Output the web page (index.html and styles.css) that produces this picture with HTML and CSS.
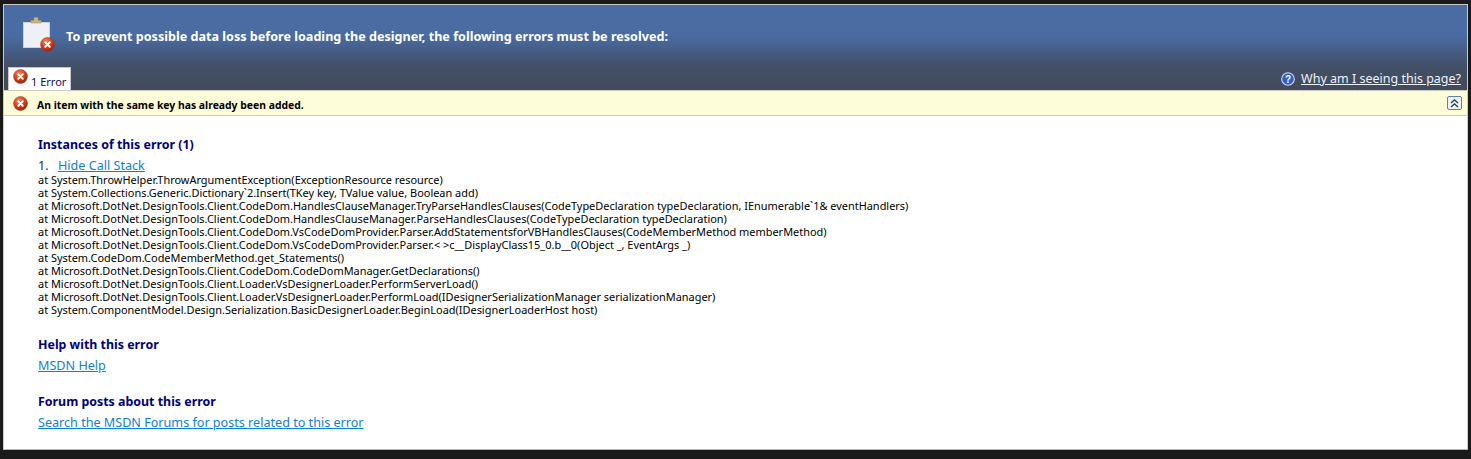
FILE: index.html
```html
<!DOCTYPE html>
<html lang="en">
<head>
  <meta charset="UTF-8" />
  <title>Designer errors</title>
  <link rel="stylesheet" href="styles.css">
</head>
<body>
  <svg class="defs" width="0" height="0">
    <defs>
      <radialGradient id="redBall" cx="40%" cy="30%" r="75%">
        <stop offset="0" stop-color="#f08a60"/>
        <stop offset="0.55" stop-color="#d5401c"/>
        <stop offset="1" stop-color="#8e1c0a"/>
      </radialGradient>
      <symbol id="errorIcon" viewBox="0 0 16 16">
        <circle cx="8" cy="8" r="7.4" fill="url(#redBall)" stroke="#a83a20" stroke-width="0.6"/>
        <path d="M5.6 5.6 L10.4 10.4 M10.4 5.6 L5.6 10.4" stroke="#fff" stroke-width="2" stroke-linecap="round"/>
      </symbol>
    </defs>
  </svg>

  <div class="window">
    <header class="banner">
      <div class="banner-top">
        <div class="clipboard">
          <svg class="clipboard-art" width="32" height="34" viewBox="0 0 32 34">
            <rect x="0.5" y="5.5" width="26" height="25" fill="#eef0f6" stroke="#c8cedd"/>
            <path d="M8 6 V3.5 H11 V0.5 H15 V3.5 H18 V6 Z" fill="#c9b77e" stroke="#a8975f" stroke-width="0.6"/>
          </svg>
          <svg class="clipboard-badge" width="15" height="15"><use href="#errorIcon"/></svg>
        </div>
        <h1>To prevent possible data loss before loading the designer, the following errors must be resolved:</h1>
      </div>
      <div class="banner-bottom">
        <div class="tab">
          <svg class="tab-icon" width="15" height="15"><use href="#errorIcon"/></svg>
          <span>1 Error</span>
        </div>
        <div class="why">
          <svg width="14" height="14" viewBox="0 0 14 14">
            <circle cx="7" cy="7" r="6.3" fill="#2f5fc4" stroke="#cfdcf5" stroke-width="1.1"/>
            <text x="7" y="10.5" class="why-q">?</text>
          </svg>
          <a href="#">Why am I seeing this page?</a>
        </div>
      </div>
    </header>

    <div class="error-bar">
      <svg width="15" height="15"><use href="#errorIcon"/></svg>
      <strong>An item with the same key has already been added.</strong>
      <button class="collapse" type="button">
        <svg width="11" height="11" viewBox="0 0 11 11">
          <path d="M2 5 L5.5 2 L9 5 M2 9 L5.5 6 L9 9" fill="none" stroke="#27407c" stroke-width="1.4"/>
        </svg>
      </button>
    </div>

    <main class="content">
      <section class="block block-first">
        <h2>Instances of this error (1)</h2>
        <div class="instance"><span class="num">1.</span><a href="#">Hide Call Stack</a></div>
        <div class="stack">
          <div>at System.ThrowHelper.ThrowArgumentException(ExceptionResource resource)</div>
          <div>at System.Collections.Generic.Dictionary`2.Insert(TKey key, TValue value, Boolean add)</div>
          <div>at Microsoft.DotNet.DesignTools.Client.CodeDom.HandlesClauseManager.TryParseHandlesClauses(CodeTypeDeclaration typeDeclaration, IEnumerable`1&amp; eventHandlers)</div>
          <div>at Microsoft.DotNet.DesignTools.Client.CodeDom.HandlesClauseManager.ParseHandlesClauses(CodeTypeDeclaration typeDeclaration)</div>
          <div>at Microsoft.DotNet.DesignTools.Client.CodeDom.VsCodeDomProvider.Parser.AddStatementsforVBHandlesClauses(CodeMemberMethod memberMethod)</div>
          <div>at Microsoft.DotNet.DesignTools.Client.CodeDom.VsCodeDomProvider.Parser.&lt; &gt;c__DisplayClass15_0.b__0(Object _, EventArgs _)</div>
          <div>at System.CodeDom.CodeMemberMethod.get_Statements()</div>
          <div>at Microsoft.DotNet.DesignTools.Client.CodeDom.CodeDomManager.GetDeclarations()</div>
          <div>at Microsoft.DotNet.DesignTools.Client.Loader.VsDesignerLoader.PerformServerLoad()</div>
          <div>at Microsoft.DotNet.DesignTools.Client.Loader.VsDesignerLoader.PerformLoad(IDesignerSerializationManager serializationManager)</div>
          <div>at System.ComponentModel.Design.Serialization.BasicDesignerLoader.BeginLoad(IDesignerLoaderHost host)</div>
        </div>
      </section>
      <section class="block">
        <h2>Help with this error</h2>
        <a href="#">MSDN Help</a>
      </section>
      <section class="block">
        <h2>Forum posts about this error</h2>
        <a href="#">Search the MSDN Forums for posts related to this error</a>
      </section>
    </main>
  </div>
</body>
</html>
```
FILE: styles.css
```css
* {
  margin: 0;
  padding: 0;
  box-sizing: border-box;
}

body {
  background-color: #1a1a1a;
  font-family: "Noto Sans", "Liberation Sans", sans-serif;
  font-size: 12px;
  color: #000;
  overflow: hidden;
}

.defs {
  position: absolute;
}

.window {
  margin: 4px 3px 0;
  height: 446px;
  background-color: #fff;
  border: 1px solid #c9c9c9;
  border-bottom-color: #b5b5a8;
}

.banner {
  height: 85px;
  background: linear-gradient(to bottom, #4a6ca2 0, #4a6ca2 30px, #455d85 46px, #424f66 62px, #414b5a 85px);
  display: flex;
  flex-direction: column;
}

.banner-top {
  height: 62px;
  padding: 12px 0 0 19px;
  display: flex;
  align-items: flex-start;
}

.clipboard {
  position: relative;
  width: 32px;
  height: 36px;
  margin-right: 11px;
}

.clipboard-badge {
  position: absolute;
  left: 17px;
  top: 20px;
}

.banner h1 {
  font-size: 12.6px;
  font-weight: 700;
  line-height: 16px;
  margin-top: 12px;
  color: #fff;
}

.banner-bottom {
  flex: 1;
  display: flex;
  justify-content: space-between;
  align-items: flex-end;
  padding: 0 6px 0 4px;
}

.tab {
  width: 63px;
  height: 23px;
  background-color: #fff;
  border: 1px solid #c9c9c9;
  border-bottom: none;
  color: #1c0a5c;
  position: relative;
  padding: 6px 0 0 22px;
  font-size: 11px;
  line-height: 16px;
}

.tab-icon {
  position: absolute;
  left: 4px;
  top: 1px;
}

.why {
  display: flex;
  align-items: center;
  gap: 6px;
  margin-bottom: 2px;
  font-size: 12.5px;
  line-height: 18px;
}

.why a {
  color: #eef2f8;
}

.why-q {
  font-family: "Liberation Sans", sans-serif;
  font-size: 10px;
  font-weight: 700;
  fill: #fff;
  text-anchor: middle;
}

.error-bar {
  height: 26px;
  background-color: #fdfdd9;
  border-top: 1px solid #c9c9c0;
  border-bottom: 1px solid #c9c9c0;
  display: flex;
  align-items: center;
  padding: 0 5px 0 9px;
}

.error-bar strong {
  font-size: 10.4px;
  margin-left: 9px;
  margin-top: 3px;
  flex: 1;
}

.collapse {
  width: 15px;
  height: 14px;
  background-color: #f1f1ea;
  border: 1px solid #5d7fb8;
  border-radius: 2px;
  display: flex;
  align-items: center;
  justify-content: center;
}

.content {
  padding: 20px 34px 0;
}

.block {
  margin-bottom: 18px;
}

.block-first {
  margin-bottom: 20px;
}

.block h2 {
  font-size: 12.4px;
  font-weight: 700;
  line-height: 17px;
  color: #000080;
  margin-bottom: 4px;
}

.content a {
  color: #0f7fd6;
  font-size: 12.6px;
  line-height: 18px;
}

.instance {
  font-size: 12.6px;
  line-height: 15px;
  color: #1a2a60;
  margin-top: 5px;
}

.content .instance a {
  line-height: 15px;
}

.num {
  display: inline-block;
  width: 20px;
}

.stack {
  font-size: 10.95px;
  line-height: 13px;
}
```
